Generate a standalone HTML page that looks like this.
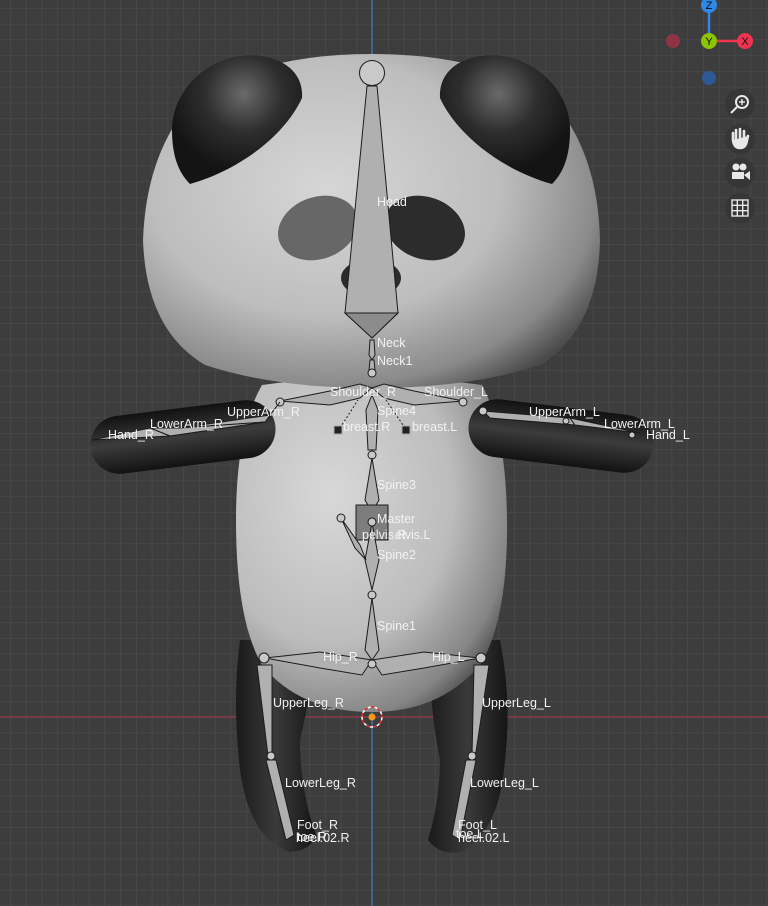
<!DOCTYPE html>
<html><head><meta charset="utf-8"><style>
html,body{margin:0;padding:0;background:#3d3d3d;width:768px;height:906px;overflow:hidden}
svg{display:block}
text{font-family:"Liberation Sans",sans-serif;font-size:12.5px;fill:#f2f2f2}
</style></head><body>
<svg width="768" height="906" viewBox="0 0 768 906" xmlns="http://www.w3.org/2000/svg">
<defs>
<pattern id="g" x="10" y="8" width="15.75" height="15.75" patternUnits="userSpaceOnUse">
<path d="M0 0V15.75M0 0H15.75" stroke="#4b4b4b" stroke-width="1.3" fill="none"/>
</pattern>
<radialGradient id="hg" cx="0.4" cy="0.4" r="0.7">
<stop offset="0" stop-color="#d6d6d6"/><stop offset="0.55" stop-color="#bdbdbd"/><stop offset="0.85" stop-color="#8a8a8a"/><stop offset="1" stop-color="#4a4a4a"/>
</radialGradient>
<radialGradient id="bg2" cx="0.35" cy="0.35" r="0.75">
<stop offset="0" stop-color="#d8d8d8"/><stop offset="0.6" stop-color="#bcbcbc"/><stop offset="0.9" stop-color="#858585"/><stop offset="1" stop-color="#555"/>
</radialGradient>
<radialGradient id="eg" cx="0.55" cy="0.3" r="0.6">
<stop offset="0" stop-color="#6a6a6a"/><stop offset="0.5" stop-color="#2e2e2e"/><stop offset="1" stop-color="#141414"/>
</radialGradient>
<radialGradient id="eg2" cx="0.45" cy="0.3" r="0.6">
<stop offset="0" stop-color="#6a6a6a"/><stop offset="0.5" stop-color="#2e2e2e"/><stop offset="1" stop-color="#141414"/>
</radialGradient>
<linearGradient id="lg" x1="0" x2="1">
<stop offset="0" stop-color="#1a1a1a"/><stop offset="0.5" stop-color="#3a3a3a"/><stop offset="1" stop-color="#151515"/>
</linearGradient>
<linearGradient id="ag" x1="0" y1="0" x2="0" y2="1">
<stop offset="0" stop-color="#111"/><stop offset="0.5" stop-color="#3c3c3c"/><stop offset="1" stop-color="#121212"/>
</linearGradient>
</defs>
<rect width="768" height="906" fill="#3d3d3d"/>
<rect width="768" height="906" fill="url(#g)"/>
<line x1="0" y1="717" x2="768" y2="717" stroke="#8a3a48" stroke-width="1.5"/>
<line x1="372" y1="0" x2="372" y2="906" stroke="#3e6ea8" stroke-width="1.5"/>

<!-- legs -->
<path d="M240 640 Q232 700 240 770 Q250 840 290 852 Q312 850 316 835 Q300 790 300 740 Q312 690 315 640 Z" fill="url(#lg)"/>
<path d="M430 640 Q428 700 440 760 Q440 800 428 840 Q440 856 462 852 Q500 830 505 760 Q512 700 500 640 Z" fill="url(#lg)"/>

<!-- body -->
<path d="M262 385 Q372 370 482 385 Q506 430 507 520 Q508 620 480 665 Q440 712 372 712 Q300 712 262 665 Q236 620 236 520 Q236 430 262 385 Z" fill="url(#bg2)"/>

<!-- arms -->
<rect x="90" y="408" width="186" height="58" rx="29" transform="rotate(-7 183 437)" fill="url(#ag)"/>
<rect x="468" y="407" width="186" height="58" rx="29" transform="rotate(7 561 436)" fill="url(#ag)"/>

<!-- head -->
<path d="M372 54 Q500 54 560 110 Q598 160 600 240 Q598 330 540 365 Q470 388 372 388 Q275 388 205 365 Q146 330 143 240 Q146 160 185 110 Q245 54 372 54 Z" fill="url(#hg)"/>
<!-- ears -->
<path d="M302 98 C304 65 270 52 240 56 C200 62 172 95 172 130 C172 155 178 172 190 184 C240 170 285 135 302 98 Z" fill="url(#eg)"/>
<path d="M440 98 C438 65 472 52 502 56 C542 62 570 95 570 130 C570 155 564 172 552 184 C502 170 457 135 440 98 Z" fill="url(#eg2)"/>
<!-- eyes / nose -->
<ellipse cx="318" cy="228" rx="41" ry="31" transform="rotate(-20 318 228)" fill="#676767"/>
<ellipse cx="425" cy="228" rx="41" ry="31" transform="rotate(20 425 228)" fill="#2c2c2c"/>
<ellipse cx="371" cy="278" rx="30" ry="19" fill="#2b2b2b"/>

<!-- bones -->
<g stroke="#1c1c1c" stroke-width="1" fill="#b0b0b0">
<polygon points="367,86 377,86 398,313 372,338 345,313"/>
<polygon points="345,313 398,313 372,338" fill="#8c8c8c"/>
<circle cx="372" cy="73" r="12.5" fill="#c9c9c9"/>
<polygon points="370,340 374,340 375,355 372,360 369,355"/>
<polygon points="370,360 374,360 375,370 372,373 369,370"/>
<circle cx="372" cy="373" r="4" fill="#c9c9c9"/>
<polygon points="372,388 360,384 330,391 280,401 330,405 360,398"/>
<polygon points="372,388 384,384 414,391 463,401 414,405 384,398"/>
<circle cx="280" cy="402" r="4" fill="#c9c9c9"/>
<circle cx="463" cy="402" r="4" fill="#c9c9c9"/>
<polygon points="372,395 366,410 368,450 376,450 378,410"/>
<circle cx="372" cy="455" r="4" fill="#c9c9c9"/>
<polygon points="372,458 365,500 372,512 379,500"/>
<polygon points="356,505 388,505 388,540 356,540" fill="#7d7d7d"/>
<polygon points="372,523 365,560 372,590 379,560"/>
<circle cx="372" cy="522" r="4" fill="#c9c9c9"/>
<polygon points="341,518 360,545 366,560 355,548"/>
<circle cx="341" cy="518" r="4" fill="#c9c9c9"/>
<circle cx="372" cy="595" r="4" fill="#c9c9c9"/>
<polygon points="372,598 365,650 372,660 379,650"/>
<polygon points="372,660 320,652 265,658 320,668 362,675"/>
<polygon points="372,660 424,652 480,658 424,668 382,675"/>
<circle cx="372" cy="664" r="4" fill="#c9c9c9"/>
<circle cx="264" cy="658" r="5" fill="#c9c9c9"/>
<circle cx="481" cy="658" r="5" fill="#c9c9c9"/>
<polygon points="257,665 272,665 272,752 268,756"/>
<polygon points="474,665 489,665 476,752 472,756"/>
<circle cx="271" cy="756" r="4" fill="#c9c9c9"/>
<circle cx="472" cy="756" r="4" fill="#c9c9c9"/>
<polygon points="266,760 276,760 294,835 286,840"/>
<polygon points="466,760 476,760 460,840 452,835"/>
<polygon points="280,402 270,415 180,428 265,422"/>
<polygon points="150,428 180,428 265,422 170,436"/>
<polygon points="92,440 150,428 170,436"/>
<polygon points="483,411 570,418 575,425 490,418"/>
<polygon points="570,418 640,433 575,425"/>
<circle cx="483" cy="411" r="4" fill="#c9c9c9"/>
<circle cx="566" cy="421" r="3" fill="#c9c9c9"/>
<circle cx="632" cy="435" r="3" fill="#c9c9c9"/>
<rect x="334" y="426" width="8" height="8" fill="#222" stroke="#aaa"/>
<rect x="402" y="426" width="8" height="8" fill="#222" stroke="#aaa"/>
</g>
<g stroke="#222" stroke-dasharray="2 2" fill="none">
<line x1="340" y1="428" x2="358" y2="400"/><line x1="405" y1="428" x2="386" y2="400"/>
</g>
<!-- 3d cursor -->
<circle cx="372" cy="717" r="10" fill="none" stroke="#fff" stroke-width="1.5" stroke-dasharray="4 3"/>
<circle cx="372" cy="717" r="10" fill="none" stroke="#d33" stroke-width="1.5" stroke-dasharray="4 3" stroke-dashoffset="3.5"/>
<circle cx="372" cy="717" r="3.5" fill="#f39a1c"/>

<!-- labels -->
<text x="377" y="206">Head</text>
<text x="377" y="347">Neck</text>
<text x="377" y="365">Neck1</text>
<text x="330" y="396">Shoulder_R</text>
<text x="424" y="396">Shoulder_L</text>
<text x="227" y="416">UpperArm_R</text>
<text x="377" y="415">Spine4</text>
<text x="529" y="416">UpperArm_L</text>
<text x="150" y="428">LowerArm_R</text>
<text x="343" y="431">breast.R</text>
<text x="412" y="431">breast.L</text>
<text x="604" y="428">LowerArm_L</text>
<text x="108" y="439">Hand_R</text>
<text x="646" y="439">Hand_L</text>
<text x="377" y="489">Spine3</text>
<text x="377" y="523">Master</text>
<text x="362" y="539">pelvis.R</text>
<text x="395" y="539">elvis.L</text>
<text x="377" y="559">Spine2</text>
<text x="377" y="630">Spine1</text>
<text x="323" y="661">Hip_R</text>
<text x="432" y="661">Hip_L</text>
<text x="273" y="707">UpperLeg_R</text>
<text x="482" y="707">UpperLeg_L</text>
<text x="285" y="787">LowerLeg_R</text>
<text x="470" y="787">LowerLeg_L</text>
<text x="297" y="829">Foot_R</text>
<text x="458" y="829">Foot_L</text>
<text x="297" y="841">toe.R</text>
<text x="456" y="838">toe.L</text>
<text x="296" y="842">heel.02.R</text>
<text x="458" y="842">heel.02.L</text>

<!-- gizmo -->
<line x1="709" y1="5" x2="709" y2="41" stroke="#2f87e8" stroke-width="2.5"/>
<line x1="709" y1="41" x2="745" y2="41" stroke="#f0344f" stroke-width="2.5"/>
<circle cx="673" cy="41" r="7" fill="#8e3444"/>
<circle cx="709" cy="78" r="7" fill="#2d5a96"/>
<circle cx="709" cy="5" r="8" fill="#2f87e8"/>
<circle cx="709" cy="41" r="8" fill="#8bc400"/>
<circle cx="745" cy="41" r="8" fill="#f0344f"/>
<g text-anchor="middle">
<text x="709" y="9" style="fill:#111;font-size:11px">Z</text>
<text x="709" y="45" style="fill:#111;font-size:11px">Y</text>
<text x="745" y="45" style="fill:#111;font-size:11px">X</text>
</g>
<g fill="#363636">
<circle cx="740" cy="104" r="15"/><circle cx="740" cy="139" r="15"/><circle cx="740" cy="173" r="15"/><circle cx="740" cy="208" r="15"/>
</g>
<g fill="none" stroke="#e8e8e8" stroke-width="2">
<circle cx="742" cy="102" r="6"/><line x1="737" y1="107" x2="731" y2="113"/>
<line x1="742" y1="99" x2="742" y2="105" stroke-width="1.5"/><line x1="739" y1="102" x2="745" y2="102" stroke-width="1.5"/>
</g>
<path d="M733 140 L733 133 M736 139 L736 130 M740 139 L740 129 M744 139 L744 131 M733 140 Q734 148 740 148 Q746 148 747 140 L748 136" stroke="#e8e8e8" stroke-width="2.6" fill="#e8e8e8" stroke-linecap="round"/>
<g fill="#e8e8e8"><circle cx="736" cy="167" r="3.5"/><circle cx="743" cy="167" r="3.5"/><rect x="732" y="172" width="12" height="7"/><polygon points="744,175 750,171 750,180"/></g>
<g stroke="#e8e8e8" stroke-width="1.4" fill="none"><rect x="732" y="200" width="16" height="16"/><path d="M737.3 200V216M742.7 200V216M732 205.3H748M732 210.7H748"/></g>
</svg>
</body></html>
